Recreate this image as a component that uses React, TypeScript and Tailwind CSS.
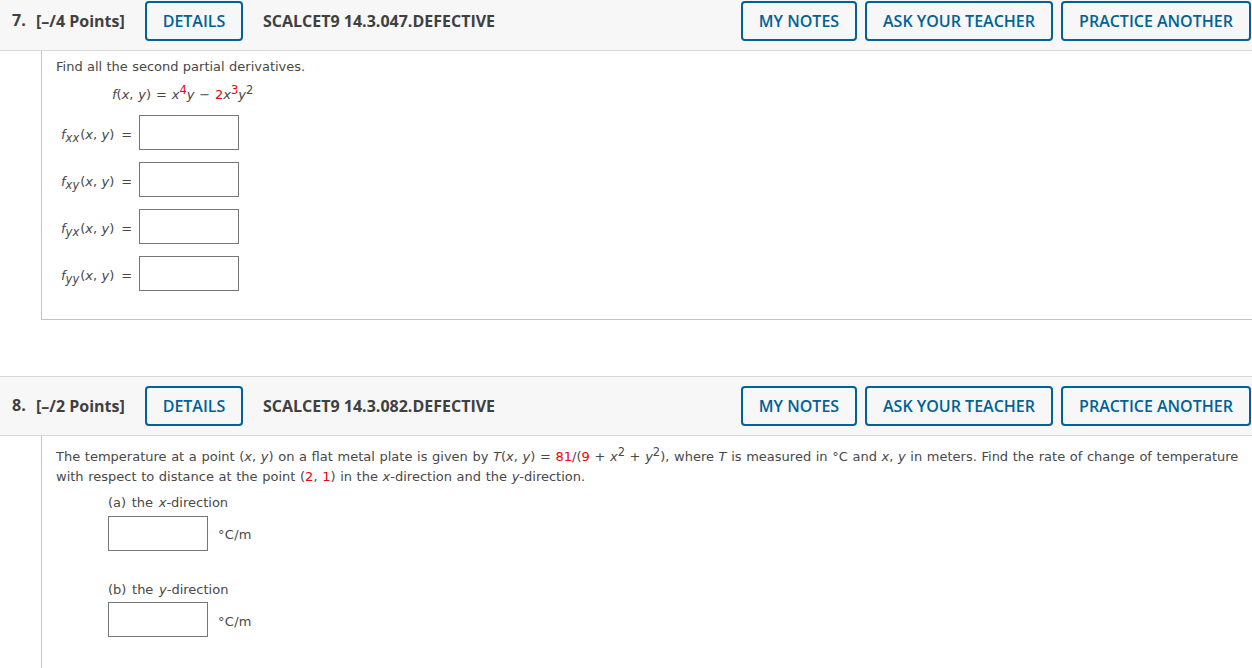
import React from "react";

const outlineButton =
  "h-10 shrink-0 rounded-[4px] border-2 border-[#006298] text-center text-base font-semibold whitespace-nowrap text-[#006298]";

const partials = ["xx", "xy", "yx", "yy"];

function Red({ children }: { children: React.ReactNode }) {
  return <span className="text-[#f00000]">{children}</span>;
}

function Sup({ children }: { children: React.ReactNode }) {
  return (
    <sup className="relative -top-[5px] align-baseline text-[11.5px] leading-none">
      {children}
    </sup>
  );
}

function AnswerBox({ label }: { label: string }) {
  return (
    <input
      type="text"
      aria-label={label}
      className="block h-[35px] w-[100px] shrink-0 border border-[#767676] bg-white px-2"
    />
  );
}

function QuestionHeader({
  number,
  points,
  name,
  className,
}: {
  number: string;
  points: string;
  name: string;
  className: string;
}) {
  return (
    <header
      className={`flex w-full items-start border-b border-[#d8d8d8] bg-[#f7f7f7] pr-px pl-3 font-['Open_Sans',sans-serif] text-base font-bold text-[#404040] ${className}`}
    >
      <span className="w-6 shrink-0 leading-[38px]">{number}</span>
      <span className="w-[109px] shrink-0 leading-10 whitespace-nowrap">
        {points}
      </span>
      <button className={`${outlineButton} w-[98px]`}>DETAILS</button>
      <span className="ml-5 leading-10 whitespace-nowrap">{name}</span>
      <div className="ml-auto flex gap-2">
        <button className={`${outlineButton} w-[116px]`}>MY NOTES</button>
        <button className={`${outlineButton} w-[188px]`}>
          ASK YOUR TEACHER
        </button>
        <button className={`${outlineButton} w-[190px]`}>
          PRACTICE ANOTHER
        </button>
      </div>
    </header>
  );
}

export default function App() {
  return (
    <div className="h-[668px] w-[1252px] overflow-hidden bg-white font-['Verdana','DejaVu_Sans',sans-serif] text-[13px] leading-5 text-[#484848] [word-spacing:0.5px]">
      {/* Question 7 */}
      <section className="[word-spacing:0.2px]">
        <QuestionHeader
          number="7."
          points="[–/4 Points]"
          name="SCALCET9 14.3.047.DEFECTIVE"
          className="h-[51px] pt-px [word-spacing:0]"
        />
        <div className="ml-[41px] h-[269px] border-b border-l border-[#c4c4c4] pt-[6px] pl-[14px]">
          <p>Find all the second partial derivatives.</p>
          <p className="mt-2 ml-14 whitespace-nowrap [word-spacing:0.7px]">
            <i>f</i>(<i>x</i>, <i>y</i>) = <i>x</i>
            <Sup>
              <Red>4</Red>
            </Sup>
            <i>y</i> − <Red>2</Red>
            <i>x</i>
            <Sup>
              <Red>3</Red>
            </Sup>
            <i>y</i>
            <Sup>2</Sup>
          </p>
          <div className="mt-[10px] ml-[5px] flex flex-col gap-3">
            {partials.map((sub) => (
              <div key={sub} className="flex">
                <span className="w-[78px] shrink-0 pt-[10px] whitespace-nowrap">
                  <i>f</i>
                  <sub className="relative top-[3px] mr-px align-baseline text-[11.5px] leading-none italic">
                    {sub}
                  </sub>
                  (<i>x</i>, <i>y</i>)<span className="ml-[7px]">=</span>
                </span>
                <AnswerBox label={`f ${sub}`} />
              </div>
            ))}
          </div>
        </div>
      </section>

      {/* Question 8 */}
      <section className="mt-14">
        <QuestionHeader
          number="8."
          points="[–/2 Points]"
          name="SCALCET9 14.3.082.DEFECTIVE"
          className="h-[60px] border-t pt-[9px] [word-spacing:0]"
        />
        <div className="ml-[41px] h-[232px] border-l border-[#c4c4c4] pt-[11px] pl-[14px]">
          <p className="whitespace-nowrap">
            The temperature at a point (<i>x</i>, <i>y</i>) on a flat metal
            plate is given by <i>T</i>(<i>x</i>, <i>y</i>) = <Red>81</Red>/(
            <Red>9</Red> + <i>x</i>
            <Sup>2</Sup> + <i>y</i>
            <Sup>2</Sup>), where <i>T</i> is measured in °C and <i>x</i>,{" "}
            <i>y</i> in meters. Find the rate of change of temperature
            <br />
            with respect to distance at the point (<Red>2</Red>, <Red>1</Red>)
            in the <i>x</i>-direction and the <i>y</i>-direction.
          </p>
          <div className="mt-[6px] ml-[52px] [word-spacing:1.5px]">
            <p>
              (a) the <i>x</i>-direction
            </p>
            <div className="mt-[3px] flex gap-[10px]">
              <AnswerBox label="x-direction" />
              <span className="pt-[9px] tracking-[0.3px]">°C/m</span>
            </div>
            <p className="mt-[29px]">
              (b) the <i>y</i>-direction
            </p>
            <div className="mt-[2px] flex gap-[10px]">
              <AnswerBox label="y-direction" />
              <span className="pt-[10px] tracking-[0.3px]">°C/m</span>
            </div>
          </div>
        </div>
      </section>
    </div>
  );
}
